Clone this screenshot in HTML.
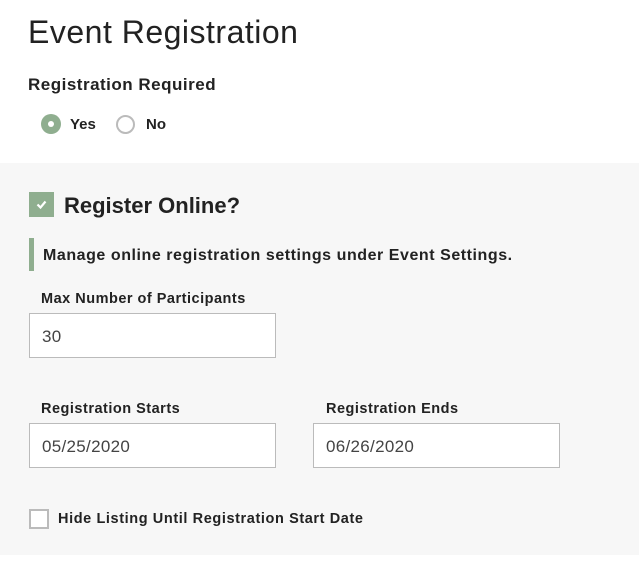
<!DOCTYPE html>
<html><head><style>
body{margin:0;width:639px;height:572px;background:#fff;font-family:"Liberation Sans",sans-serif;color:#222;position:relative;overflow:hidden}
.a{position:absolute;white-space:nowrap}
.panel{position:absolute;left:0;top:163px;width:639px;height:392px;background:#f7f7f7}
.inp{position:absolute;background:#fff;border:1px solid #bbb;box-sizing:border-box;height:45px;font-size:17px;color:#444;padding-left:12px;line-height:45px;letter-spacing:0.3px}
.lbl{font-size:14.5px;font-weight:bold;color:#222;letter-spacing:0.5px}
</style></head><body>
<div class="a" style="left:28px;top:14px;font-size:32px;color:#222;letter-spacing:0.5px">Event Registration</div>
<div class="a" style="left:28px;top:75px;font-size:17px;font-weight:bold;letter-spacing:0.5px">Registration Required</div>
<div class="a" style="left:41px;top:114px;width:20px;height:20px;border-radius:50%;background:#8fae8f"></div>
<div class="a" style="left:48px;top:121px;width:6px;height:6px;border-radius:50%;background:#fff"></div>
<div class="a" style="left:70px;top:116px;font-size:15px;font-weight:bold">Yes</div>
<div class="a" style="left:116px;top:115px;width:15px;height:15px;border-radius:50%;border:2px solid #bbb;background:#fff"></div>
<div class="a" style="left:146px;top:116px;font-size:15px;font-weight:bold">No</div>
<div class="panel"></div>
<div class="a" style="left:29px;top:192px;width:25px;height:25px;background:#8fae8f"></div>
<svg class="a" style="left:29px;top:192px" width="25" height="25"><path d="M8.5 12.5l3 3 5-6" stroke="#fff" stroke-width="2.2" fill="none"/></svg>
<div class="a" style="left:64px;top:193px;font-size:22px;font-weight:bold;color:#222">Register Online?</div>
<div class="a" style="left:29px;top:238px;width:5px;height:33px;background:#8fae8f"></div>
<div class="a" style="left:43px;top:247px;font-size:16px;font-weight:bold;letter-spacing:0.55px">Manage online registration settings under Event Settings.</div>
<div class="a lbl" style="left:41px;top:291px">Max Number of Participants</div>
<div class="inp" style="left:29px;top:313px;width:247px">30</div>
<div class="a lbl" style="left:41px;top:401px">Registration Starts</div>
<div class="inp" style="left:29px;top:423px;width:247px">05/25/2020</div>
<div class="a lbl" style="left:326px;top:401px">Registration Ends</div>
<div class="inp" style="left:313px;top:423px;width:247px">06/26/2020</div>
<div class="a" style="left:29px;top:509px;width:20px;height:20px;border:2px solid #bbb;box-sizing:border-box;background:#fff"></div>
<div class="a lbl" style="left:58px;top:511px;letter-spacing:0.6px">Hide Listing Until Registration Start Date</div>
</body></html>
